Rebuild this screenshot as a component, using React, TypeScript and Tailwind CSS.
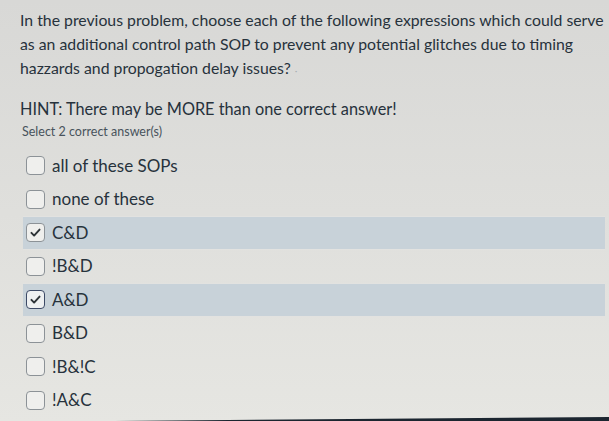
import React from "react";

const options: { label: string; checked: boolean; focus?: boolean }[] = [
  { label: "all of these SOPs", checked: false },
  { label: "none of these", checked: false },
  { label: "C&D", checked: true },
  { label: "!B&D", checked: false },
  { label: "A&D", checked: true, focus: true },
  { label: "B&D", checked: false },
  { label: "!B&!C", checked: false },
  { label: "!A&C", checked: false },
];

function Box({ checked, focus }: { checked: boolean; focus?: boolean }) {
  return (
    <div
      className={
        focus
          ? "w-[19px] h-[19px] rounded-[4px] border-[1.5px] border-[#3d4a66] bg-[#eef0f1] flex items-center justify-center shrink-0"
          : "w-[19px] h-[19px] rounded-[4px] border-[1.5px] border-[#8c9297] bg-[#efefed] flex items-center justify-center shrink-0"
      }
    >
      {checked && (
        <svg width="13" height="13" viewBox="0 0 16 16">
          <path
            d="M3 8.5 L6.3 11.8 L13 4.5"
            fill="none"
            stroke="#2e3438"
            strokeWidth="2.4"
            strokeLinecap="round"
            strokeLinejoin="round"
          />
        </svg>
      )}
    </div>
  );
}

export default function App() {
  return (
    <div
      className="w-[609px] h-[421px] overflow-hidden flex flex-col bg-linear-to-b from-[#d8d8d6] to-[#e6e6e2] text-[#27323c]"
      style={{ fontFamily: "Lato, 'Open Sans', sans-serif" }}
    >
      <div className="pt-[8px] pl-[20px] text-[15.8px] leading-[24px] whitespace-nowrap">
        In the previous problem, choose each of the following expressions which could serve
        <br />
        as an additional control path SOP to prevent any potential glitches due to timing
        <br />
        hazzards and propogation delay issues?{" "}
        <span className="text-[#aab0b4] text-[10px]">·</span>
      </div>
      <div className="mt-[15px] pl-[20px] text-[16.3px] leading-[24px] whitespace-nowrap">
        HINT: There may be MORE than one correct answer!
      </div>
      <div className="mt-[2px] pl-[22px] text-[12.5px] leading-[18px] text-[#48535c]">
        Select 2 correct answer(s)
      </div>
      <div className="mt-[8px] pl-[23px] pr-[4px] flex flex-col">
        {options.map((o) => (
          <div
            key={o.label}
            className={
              o.checked
                ? "h-[33.5px] flex items-center gap-[7px] pl-[3px] bg-[#c8d2d9] border-y border-[#e2e2e0]"
                : "h-[33.5px] flex items-center gap-[7px] pl-[3px]"
            }
          >
            <Box checked={o.checked} focus={o.focus} />
            <span className="text-[17px] leading-[20px]">{o.label}</span>
          </div>
        ))}
      </div>
      <div className="mt-auto ml-[115px] h-[12px] bg-[#1c2630] [clip-path:polygon(0_100%,100%_0,100%_100%)]" />
    </div>
  );
}
